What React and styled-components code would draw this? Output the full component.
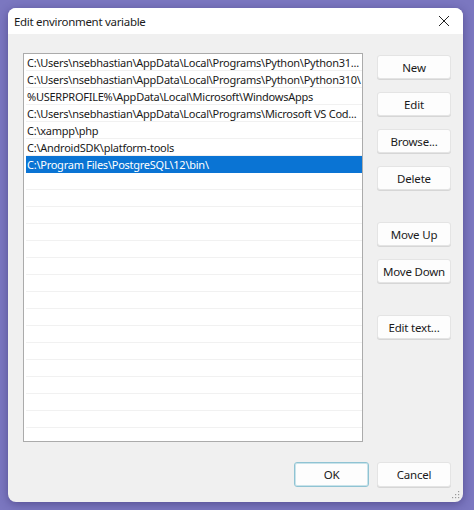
import React from "react";
import styled, { createGlobalStyle } from "styled-components";

const Global = createGlobalStyle`
  html, body { margin: 0; padding: 0; }
  body {
    background: #7b77c0;
    width: 474px;
    height: 510px;
    overflow: hidden;
    font-family: "Segoe UI", "Noto Sans", "Liberation Sans", sans-serif;
  }
`;

const Dialog = styled.div`
  margin: 8px 0 0 8px;
  width: 455px;
  height: 494px;
  background: #f0f0f0;
  border-radius: 8px;
  box-shadow: 0 2px 10px rgba(40, 30, 90, 0.45);
  display: flex;
  flex-direction: column;
  overflow: hidden;
  position: relative;
`;

const TitleBar = styled.div`
  height: 26px;
  background: #ffffff;
  display: flex;
  align-items: center;
  justify-content: space-between;
  padding: 0 10px 0 6px;
  flex-shrink: 0;
`;

const Title = styled.span`
  font-size: 11.5px;
  color: #1b1b1b;
  letter-spacing: -0.3px;
`;

const Close = styled.svg`
  width: 12px;
  height: 12px;
  margin-right: 3px;
`;

const Content = styled.div`
  flex: 1;
  display: flex;
  flex-direction: column;
  padding: 19px 12px 15px 15px;
`;

const Main = styled.div`
  display: flex;
  gap: 14px;
  height: 389px;
`;

const ListBox = styled.div`
  width: 340px;
  height: 389px;
  box-sizing: border-box;
  background: #ffffff;
  border: 1px solid #ababab;
  overflow: hidden;
`;

const Row = styled.div`
  height: 17px;
  box-sizing: border-box;
  display: flex;
  align-items: center;
  padding-left: 1px;
  margin-left: 2px;
  font-size: 11px;
  white-space: nowrap;
  overflow: hidden;
  color: ${(p) => (p.$selected ? "#ffffff" : "#1a1a1a")};
  background: ${(p) => (p.$selected ? "#0a74d4" : "transparent")};
  border-bottom: 1px solid ${(p) => (p.$selected ? "#0a74d4" : "#f1f1f1")};
  letter-spacing: -0.25px;
`;

const Side = styled.div`
  display: flex;
  flex-direction: column;
  width: 74px;
  padding-top: 2px;
  gap: 13px;
`;

const Button = styled.button`
  width: ${(p) => p.$w || 74}px;
  height: ${(p) => p.$h || 24}px;
  box-sizing: border-box;
  background: #fdfdfd;
  border: 1px solid ${(p) => (p.$default ? "#8fc3d3" : "#e4e4e4")};
  border-radius: 3px;
  font-family: inherit;
  font-size: 11.5px;
  color: #1a1a1a;
  padding: 0;
  margin-top: ${(p) => p.$mt || 0}px;
  letter-spacing: -0.2px;
  box-shadow: ${(p) => (p.$default ? "inset 0 0 0 1px #c9e3ea" : "0 1px 0 #d6d6d6")};
`;

const Footer = styled.div`
  display: flex;
  justify-content: flex-end;
  gap: 8px;
  margin-top: 20px;
`;

const Grip = styled.svg`
  position: absolute;
  right: 3px;
  bottom: 3px;
  width: 10px;
  height: 10px;
`;

const items = [
  "C:\\Users\\nsebhastian\\AppData\\Local\\Programs\\Python\\Python31...",
  "C:\\Users\\nsebhastian\\AppData\\Local\\Programs\\Python\\Python310\\",
  "%USERPROFILE%\\AppData\\Local\\Microsoft\\WindowsApps",
  "C:\\Users\\nsebhastian\\AppData\\Local\\Programs\\Microsoft VS Cod...",
  "C:\\xampp\\php",
  "C:\\AndroidSDK\\platform-tools",
  "C:\\Program Files\\PostgreSQL\\12\\bin\\",
];

export default function App() {
  const rows = [...items];
  while (rows.length < 23) rows.push("");
  return (
    <>
      <Global />
      <Dialog>
        <TitleBar>
          <Title>Edit environment variable</Title>
          <Close viewBox="0 0 12 12">
            <path d="M1 1 L11 11 M11 1 L1 11" stroke="#222" strokeWidth="1" fill="none" />
          </Close>
        </TitleBar>
        <Content>
          <Main>
            <ListBox>
              {rows.map((t, i) => (
                <Row key={i} $selected={i === 6}>
                  {t}
                </Row>
              ))}
            </ListBox>
            <Side>
              <Button>New</Button>
              <Button>Edit</Button>
              <Button>Browse...</Button>
              <Button>Delete</Button>
              <Button $mt={19}>Move Up</Button>
              <Button>Move Down</Button>
              <Button $mt={19}>Edit text...</Button>
            </Side>
          </Main>
          <Footer>
            <Button $default $w={75} $h={25}>OK</Button>
            <Button $h={25}>Cancel</Button>
          </Footer>
        </Content>
        <Grip viewBox="0 0 10 10">
          <g fill="#9a9a9a">
            <rect x="8" y="2" width="1.2" height="1.2" />
            <rect x="5" y="5" width="1.2" height="1.2" />
            <rect x="8" y="5" width="1.2" height="1.2" />
            <rect x="2" y="8" width="1.2" height="1.2" />
            <rect x="5" y="8" width="1.2" height="1.2" />
            <rect x="8" y="8" width="1.2" height="1.2" />
          </g>
        </Grip>
      </Dialog>
    </>
  );
}
